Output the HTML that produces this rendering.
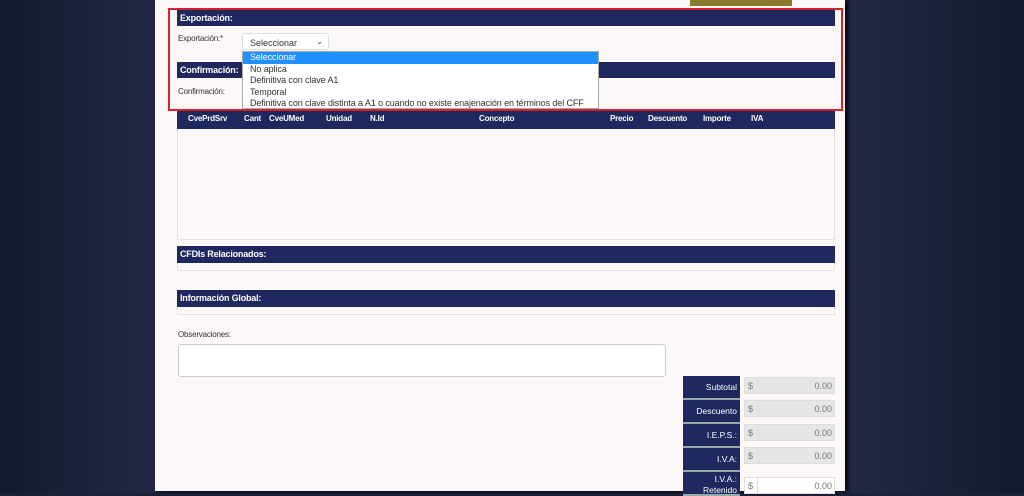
<!DOCTYPE html><html><head><style>
*{margin:0;padding:0;box-sizing:border-box}
body{width:1024px;height:493px;overflow:hidden;background:#1c2038;font-family:"Liberation Sans",sans-serif;position:relative}
.a{position:absolute}
.bar{position:absolute;background:#1f285e;color:#fff;font-size:9px;font-weight:bold;padding-left:3px;letter-spacing:-0.2px}
.t{position:absolute;font-size:8px;color:#333;letter-spacing:-0.2px}
.lab{position:absolute;left:683px;width:57px;background:#1f285e;color:#fff;font-size:8.5px;text-align:right;padding-right:3px;border-bottom:2px solid #9aa}
.inp{position:absolute;left:744px;width:91px;height:17px;background:#e6e6e6;border:1px solid #ddd;font-size:9px;color:#777;text-align:right;padding:3px 2px 0 0}
.inp span{position:absolute;left:3px;top:3px}
.inp i{position:absolute;left:12px;top:0;bottom:0;border-left:1px solid #ddd}
.dd div{height:11.5px;font-size:9px;color:#333;padding-left:7px;line-height:11.5px;letter-spacing:-0.1px}
</style></head><body>
<div class="a" style="left:0;top:0;width:155px;height:493px;background:linear-gradient(90deg,#15192e,#232846)"></div>
<div class="a" style="left:850px;top:0;width:174px;height:493px;background:linear-gradient(90deg,#232846,#15192e)"></div>
<div class="a" style="left:155px;top:0;width:690px;height:491px;background:#fcf8f8;box-shadow:2px 0 4px #000"></div>
<div class="a" style="left:690px;top:0;width:102px;height:6px;background:#8b7a2c"></div>
<div class="a" style="left:168px;top:8px;width:675px;height:103px;border:2px solid #d8202a"></div>
<div class="bar" style="left:177px;top:10px;width:658px;height:16px;line-height:16px">Exportación:</div>
<div class="t" style="left:178px;top:34px">Exportación:*</div>
<div class="a" style="left:242px;top:33px;width:87px;height:17px;border:1px solid #ddd;border-radius:3px;background:#fff;font-size:9px;color:#333;padding:4px 0 0 7px">Seleccionar<span style="position:absolute;right:5px;top:3px;font-size:8px">⌄</span></div>
<div class="bar" style="left:177px;top:62px;width:658px;height:16px;line-height:16px">Confirmación:</div>
<div class="t" style="left:178px;top:87px">Confirmación:</div>
<div class="a dd" style="left:242px;top:51px;width:357px;height:58px;background:#fff;border:1px solid #aaa">
<div style="background:#1e90ff;color:#fff">Seleccionar</div><div>No aplica</div><div>Definitiva con clave A1</div><div>Temporal</div><div>Definitiva con clave distinta a A1 o cuando no existe enajenación en términos del CFF</div></div>
<div class="bar" style="left:177px;top:111px;width:658px;height:18px;font-size:8px;line-height:16px;padding:0">
<span class="a" style="left:11px">CvePrdSrv</span><span class="a" style="left:67px">Cant</span><span class="a" style="left:92px">CveUMed</span><span class="a" style="left:149px">Unidad</span><span class="a" style="left:193px">N.Id</span><span class="a" style="left:302px">Concepto</span><span class="a" style="left:433px">Precio</span><span class="a" style="left:471px">Descuento</span><span class="a" style="left:526px">Importe</span><span class="a" style="left:574px">IVA</span></div>
<div class="a" style="left:177px;top:129px;width:658px;height:111px;border:1px solid #e6e2e2;border-top:0"></div>
<div class="bar" style="left:177px;top:246px;width:658px;height:17px;line-height:17px">CFDIs Relacionados:</div>
<div class="a" style="left:177px;top:263px;width:658px;height:8px;border:1px solid #e6e2e2;border-top:0"></div>
<div class="bar" style="left:177px;top:290px;width:658px;height:17px;line-height:17px">Información Global:</div>
<div class="a" style="left:177px;top:307px;width:658px;height:8px;border:1px solid #e6e2e2;border-top:0"></div>
<div class="t" style="left:178px;top:330px">Observaciones:</div>
<div class="a" style="left:178px;top:344px;width:488px;height:33px;background:#fff;border:1px solid #ccc;border-radius:3px"></div>
<div class="lab" style="top:376px;height:24px;line-height:22px">Subtotal</div>
<div class="lab" style="top:400px;height:24px;line-height:22px">Descuento</div>
<div class="lab" style="top:424px;height:24px;line-height:22px">I.E.P.S.:</div>
<div class="lab" style="top:448px;height:24px;line-height:22px">I.V.A:</div>
<div class="lab" style="top:472px;height:24px;line-height:11px;padding-top:2px">I.V.A.:<br>Retenido</div>
<div class="inp" style="top:377px"><span>$</span><i></i>0.00</div>
<div class="inp" style="top:400px"><span>$</span><i></i>0.00</div>
<div class="inp" style="top:424px"><span>$</span><i></i>0.00</div>
<div class="inp" style="top:447px"><span>$</span><i></i>0.00</div>
<div class="inp" style="top:477px;background:#fff"><span>$</span><i></i>0.00</div>
</body></html>
